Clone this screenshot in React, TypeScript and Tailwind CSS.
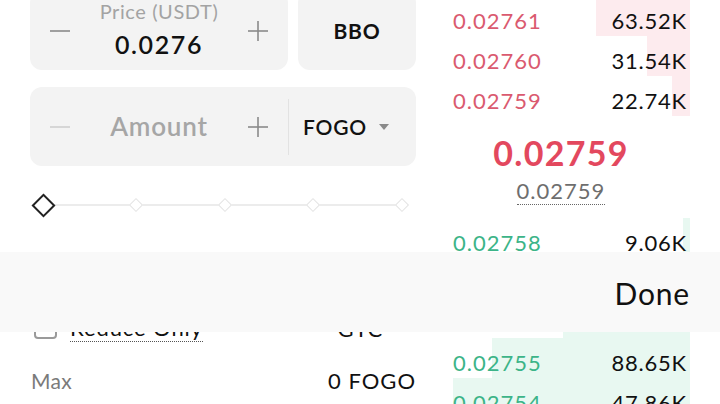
import React from "react";

const font = { fontFamily: "Lato, 'Noto Sans', sans-serif" };

type Row = { p: string; a: string; bar: number };

const asks: Row[] = [
  { p: "0.02761", a: "63.52K", bar: 94 },
  { p: "0.02760", a: "31.54K", bar: 43 },
  { p: "0.02759", a: "22.74K", bar: 18 },
];
const bids: Row[] = [
  { p: "0.02758", a: "9.06K", bar: 7 },
  { p: "0.02757", a: "12.40K", bar: 60 },
  { p: "0.02756", a: "40.12K", bar: 127 },
  { p: "0.02755", a: "88.65K", bar: 198 },
  { p: "0.02754", a: "47.86K", bar: 237 },
];

function BookRow({ r, side }: { r: Row; side: "ask" | "bid" }) {
  return (
    <div className="relative h-[40px] flex items-center pt-[8px] pl-[33px] pr-[33px]">
      <div
        className={side === "ask" ? "absolute top-0 bottom-0 right-[30px] bg-[#fdebee]" : "absolute top-0 bottom-0 right-[30px] bg-[#e8f8f1]"}
        style={{ width: r.bar }}
      />
      <span
        className={
          side === "ask"
            ? "relative text-[22px] tracking-[1px] text-[#da5a6f]"
            : "relative text-[22px] tracking-[1px] text-[#3cb488]"
        }
      >
        {r.p}
      </span>
      <span className="relative ml-auto text-[22px] tracking-[0.8px] text-[#111]">{r.a}</span>
    </div>
  );
}

function Minus({ light }: { light?: boolean }) {
  return (
    <svg width="22" height="22" viewBox="0 0 22 22">
      <line x1="1" y1="11" x2="21" y2="11" stroke={light ? "#cfcfcf" : "#8a8a8a"} strokeWidth="1.6" />
    </svg>
  );
}
function Plus() {
  return (
    <svg width="22" height="22" viewBox="0 0 22 22">
      <line x1="1" y1="11" x2="21" y2="11" stroke="#8a8a8a" strokeWidth="1.6" />
      <line x1="11" y1="1" x2="11" y2="21" stroke="#8a8a8a" strokeWidth="1.6" />
    </svg>
  );
}

export default function App() {
  return (
    <div className="relative w-[720px] h-[404px] overflow-hidden bg-white" style={font}>
      <div className="flex mt-[-9px]">
        {/* Left column */}
        <div className="ml-[30px] w-[386px] flex flex-col">
          <div className="flex gap-[10px]">
            <div className="w-[258px] h-[79px] rounded-[12px] bg-[#f3f3f3] flex items-center px-[19px]">
              <Minus />
              <div className="flex-1 flex flex-col items-center pt-[1px]">
                <span className="text-[20px] leading-[26px] text-[#a3a3a3] tracking-[0.6px]">Price (USDT)</span>
                <span className="text-[25px] leading-[40px] font-semibold text-[#111] tracking-[1.6px]">0.0276</span>
              </div>
              <Plus />
            </div>
            <div className="w-[118px] h-[79px] rounded-[12px] bg-[#f3f3f3] flex items-center justify-center">
              <span className="text-[21px] font-bold text-[#111] tracking-[0.8px]">BBO</span>
            </div>
          </div>
          <div className="mt-[17px] h-[79px] rounded-[12px] bg-[#f3f3f3] flex items-center">
            <div className="w-[258px] flex items-center px-[19px]">
              <Minus light />
              <span className="flex-1 text-center text-[26px] font-semibold text-[#a6a6a6] tracking-[0.8px]">Amount</span>
              <Plus />
            </div>
            <div className="w-px h-[56px] bg-[#e2e2e2]" />
            <div className="flex-1 flex items-center pl-[14px]">
              <span className="text-[21px] font-semibold text-[#111] tracking-[0.8px]">FOGO</span>
              <svg width="12" height="8" viewBox="0 0 12 8" className="ml-[11px]">
                <path d="M1 1 L11 1 L6 7 Z" fill="#8a8a8a" />
              </svg>
            </div>
          </div>
          {/* slider */}
          <div className="relative mt-[26px] h-[26px] flex items-center">
            <div className="absolute left-[13px] right-[14px] top-[12px] h-[2px] bg-[#ececec]" />
            <div className="relative w-full flex items-center justify-between pl-[5px] pr-[9px]">
              <div className="w-[17px] h-[17px] rotate-45 border-2 border-[#222] bg-white" />
              <div className="w-[10px] h-[10px] rotate-45 border-[1.5px] border-[#e3e3e3] bg-white" />
              <div className="w-[10px] h-[10px] rotate-45 border-[1.5px] border-[#e3e3e3] bg-white" />
              <div className="w-[10px] h-[10px] rotate-45 border-[1.5px] border-[#e3e3e3] bg-white" />
              <div className="w-[10px] h-[10px] rotate-45 border-[1.5px] border-[#e3e3e3] bg-white" />
            </div>
          </div>
          {/* reduce only */}
          <div className="mt-[96px] h-[28px] flex items-center">
            <div className="ml-[4px] w-[23px] h-[21px] rounded-[4px] border-2 border-[#9a9a9a]" />
            <span className="ml-[13px] text-[22px] leading-[26px] text-[#111] tracking-[0.9px] border-b border-dotted border-[#555]">Reduce Only</span>
            <span className="ml-auto mr-[33px] text-[22px] text-[#111] tracking-[0.8px]">GTC</span>
          </div>
          <div className="mt-[22px] flex items-center justify-between">
            <span className="ml-[1px] text-[21px] text-[#7a7a7a] tracking-[0.3px]">Max</span>
            <span className="text-[22px] text-[#111] tracking-[1px]">0 FOGO</span>
          </div>
        </div>

        {/* Right column: order book */}
        <div className="ml-[4px] w-[300px] flex flex-col pt-[5px]">
          {asks.map((r) => (
            <BookRow key={r.p} r={r} side="ask" />
          ))}
          <div className="h-[102px] flex flex-col items-center pl-[33px] pr-[51px] pt-[17px]">
            <span className="text-[34px] leading-[40px] font-bold text-[#e3485e] tracking-[1.3px]">0.02759</span>
            <span className="mt-[5px] text-[22px] leading-[26px] text-[#6e6e6e] tracking-[1px] border-b border-dotted border-[#666]">0.02759</span>
          </div>
          {bids.map((r) => (
            <BookRow key={r.p} r={r} side="bid" />
          ))}
        </div>
      </div>

      {/* Done bar overlay */}
      <div className="absolute left-0 right-0 top-[252px] h-[80px] bg-[#f9f9f9] flex items-center justify-end pr-[30px]">
        <span className="text-[30px] text-[#111] tracking-[0.8px] pt-[2px]">Done</span>
      </div>
    </div>
  );
}
